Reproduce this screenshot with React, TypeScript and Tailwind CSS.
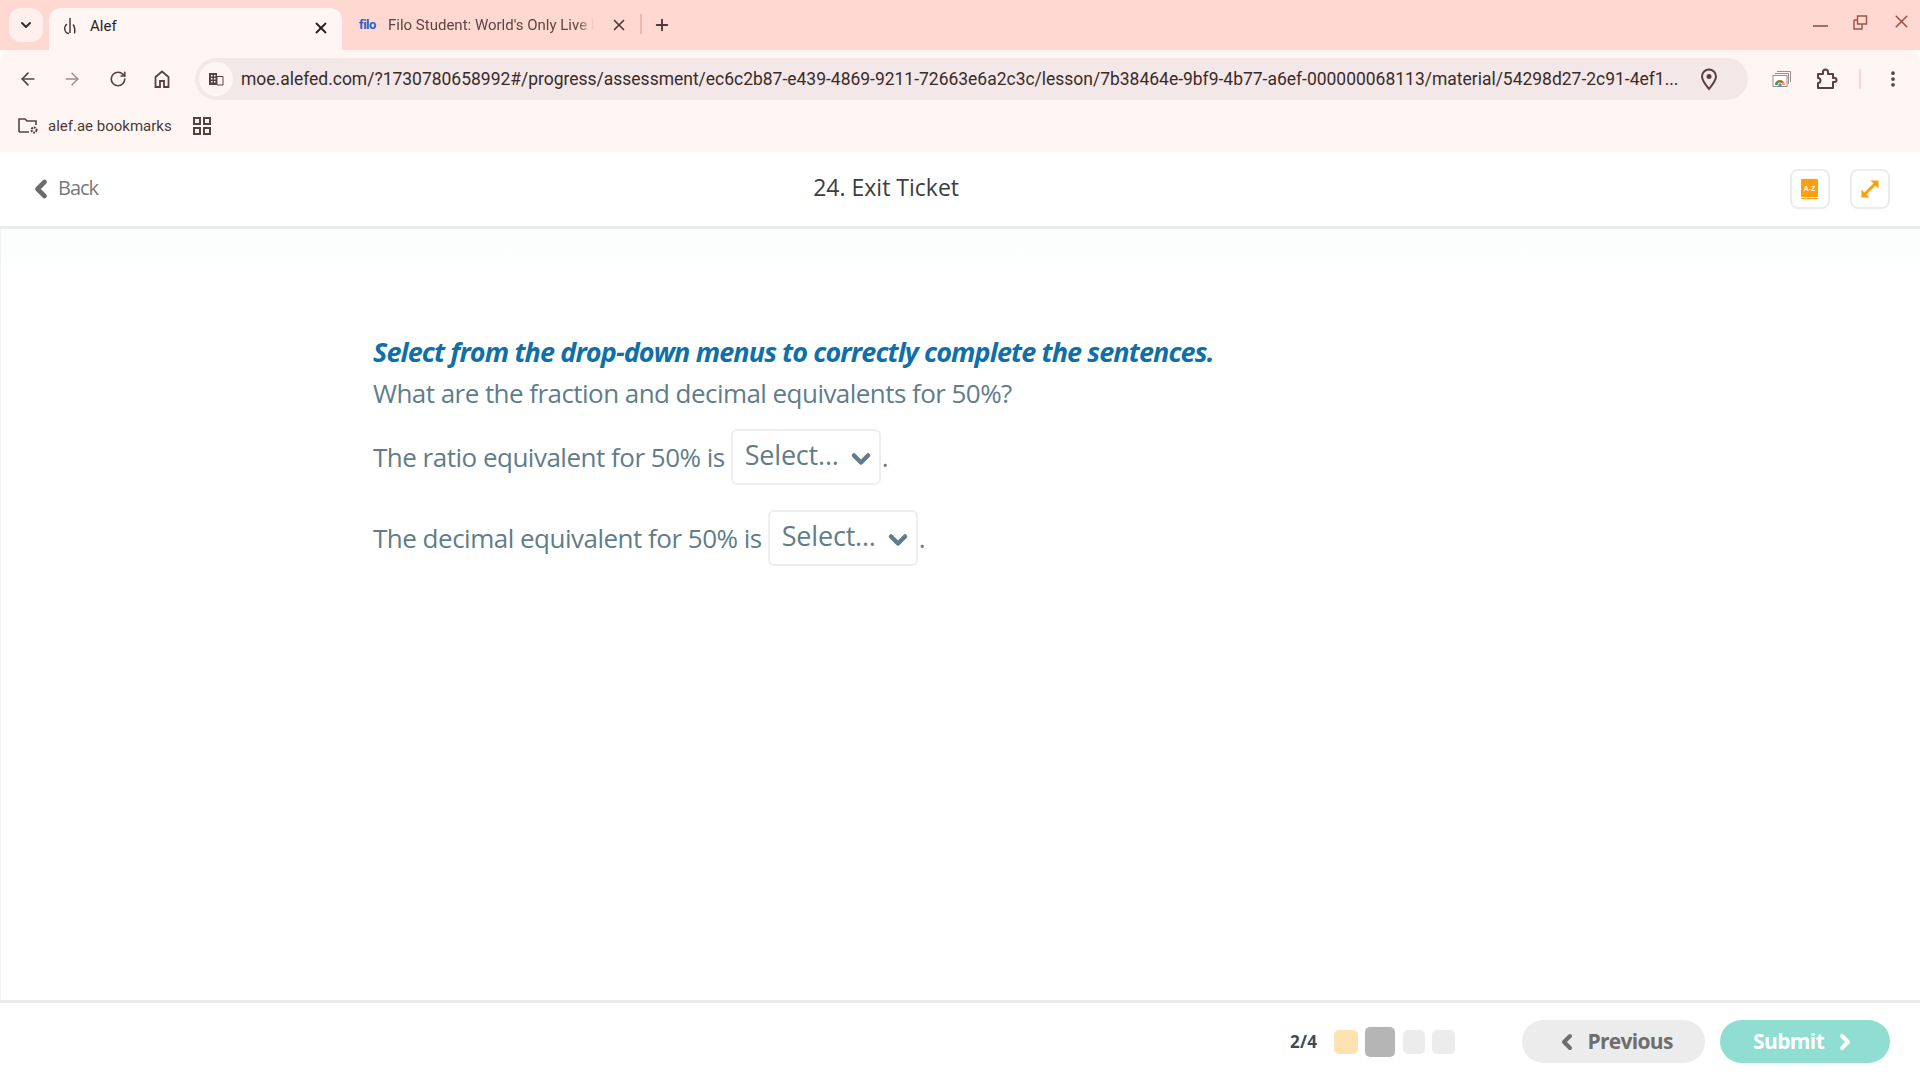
import React from "react";
import { ArrowLeft, ArrowRight, RotateCw, X, Plus, ChevronDown, MoreVertical, ChevronLeft, ChevronRight } from "lucide-react";

const Sel = () => (
  <span className="mx-[6px] mr-0 inline-flex h-[56px] w-[150px] shrink-0 items-center rounded-[6px] border-2 border-[#eceeef] bg-white pl-[12px] align-middle">
    <span className="relative -top-[3px] text-[27px] leading-none tracking-[-0.2px]">Select...</span>
    <svg width="24" height="24" viewBox="0 0 24 24" className="ml-[10px] mt-[4px]" fill="none" stroke="#5f7d8a" strokeWidth="4.500" strokeLinecap="round" strokeLinejoin="round"><path d="M5 8.500l7 7 7-7" /></svg>
  </span>
);

export default function App() {
  return (
    <div className="flex h-[1080px] w-[1920px] flex-col overflow-hidden bg-white font-['Roboto',sans-serif]">
      {/* tabs */}
      <div className="flex h-[50px] items-start bg-[#fed8d1] pl-[9px] pt-[8px] text-[#3f2b28]">
        <div className="flex h-[34px] w-[34px] items-center justify-center rounded-[12px] bg-[#fff0ed]"><ChevronDown size={16} strokeWidth={3} /></div>
        <div className="ml-[6px] flex h-[42px] w-[293px] items-start rounded-t-[12px] bg-[#fff6f4] pl-[12px] pr-[12px] pt-[5px]">
          <svg width="18" height="26" viewBox="0 0 18 26" className="mt-[1px]" fill="none" stroke="#3f2b28" strokeWidth="1.400"><path d="M9 4v15M6 10C2.500 12.500 3 19 8 19.500M12 10.500c2 2.500 2 6 1.500 9" /></svg>
          <span className="ml-[11px] text-[15px] leading-[26px] text-[#2a1f1d]">Alef</span>
          <X size={18} strokeWidth={2.500} className="ml-auto mt-[6px] text-[#2a1f1d]" />
        </div>
        <div className="ml-[17px] flex h-[34px] w-[270px] items-center">
          <span className="w-[22px] text-[13px] font-bold tracking-[-0.5px] text-[#2a62c4]">filo</span>
          <span className="ml-[7px] w-[206px] overflow-hidden whitespace-nowrap text-[15px] text-[#5a4744] [mask-image:linear-gradient(90deg,#000_92%,transparent)]">Filo Student: World's Only Live I</span>
          <X size={18} strokeWidth={2.200} className="ml-[16px] text-[#4a3a37]" />
        </div>
        <div className="ml-[11px] mt-[6px] h-[20px] w-[2px] bg-[#f5b5a9]" />
        <Plus size={18} strokeWidth={2.500} className="ml-[11px] mt-[8px] text-[#4a3a37]" />
        <div className="ml-auto flex items-start pr-[8px] text-[#a14f44]">
          <div className="mt-[17px] h-[2px] w-[15px] bg-[#a96a60]" />
          <svg width="15" height="15" viewBox="0 0 15 15" className="ml-[25px] mt-[7px]" fill="none" stroke="#a14f44" strokeWidth="1.400"><path d="M4.500 1h9v8h-9zM1 5h3.500M1 5v9h8v-4.500" /></svg>
          <X size={21} strokeWidth={1.800} className="ml-[23px] mt-[3px]" />
        </div>
      </div>
      {/* toolbar */}
      <div className="flex h-[58px] items-center rounded-t-[10px] bg-[#fff6f4] text-[#5a4140]">
        <ArrowLeft size={20} strokeWidth={2} className="ml-[18px]" />
        <ArrowRight size={20} strokeWidth={1.800} className="ml-[24px] text-[#a08f8c]" />
        <RotateCw size={18} strokeWidth={2.200} className="ml-[27px]" />
        <svg width="20" height="20" viewBox="0 0 20 20" className="ml-[25px]" fill="none" stroke="#5a4140" strokeWidth="1.800"><path d="M3.500 18V8L10 2.500 16.500 8v10h-4.500v-6H8v6z" /></svg>
        <div className="ml-[23px] flex h-[42px] w-[1553px] items-center rounded-full bg-[#f3e7e7] pl-[4px]">
          <div className="flex h-[34px] w-[34px] items-center justify-center rounded-full bg-[#fff6f4]">
            <svg width="16" height="14" viewBox="0 0 16 14"><path d="M1 1h8v12H1z" fill="#5a4140" /><path d="M9 4.500h6V13H9z" fill="none" stroke="#5a4140" /><path d="M3 3h1.500v1.500H3zM6 3h1.500v1.500H6zM3 6h1.500v1.500H3zM6 6h1.500v1.500H6zM3 9h1.500v1.500H3zM6 9h1.500v1.500H6z" fill="#fff" /></svg>
          </div>
          <span className="ml-[8px] w-[1441px] shrink-0 overflow-hidden whitespace-nowrap text-[17.480px] text-[#3a2b2a]">moe.alefed.com/?1730780658992#/progress/assessment/ec6c2b87-e439-4869-9211-72663e6a2c3c/lesson/7b38464e-9bf9-4b77-a6ef-000000068113/material/54298d27-2c91-4ef1...</span>
          <svg width="20" height="24" viewBox="0 0 20 24" className="ml-[17px]" fill="none" stroke="#5a4140" strokeWidth="2"><path d="M10 22C6 17 3 13.500 3 9.500a7 7 0 0 1 14 0C17 13.500 14 17 10 22z" /><circle cx="10" cy="9.500" r="2.500" fill="#5a4140" stroke="none" /></svg>
        </div>
        <svg width="20" height="18" viewBox="0 0 20 18" className="ml-[24px]"><path d="M5 1.500h13.500V12" fill="none" stroke="#9a8d8c" /><path d="M3 3.500h13.500V14" fill="none" stroke="#9a8d8c" /><rect x="1" y="5.500" width="14" height="11" fill="#fff" stroke="#9a8d8c" /><path d="M3 15a5 5 0 0 1 10 0h-2.500a2.500 2.500 0 0 0-5 0z" fill="#e4a93a" /><path d="M3 15a5 5 0 0 1 3.500-4.700l1 2A2.500 2.500 0 0 0 5.500 15z" fill="#3f9a52" /><path d="M6.500 10.500a5 5 0 0 1 5 1.500L9.500 13a2.500 2.500 0 0 0-2-.7z" fill="#d6473a" /><circle cx="8" cy="15" r="1.700" fill="#4a86e8" /></svg>
        <svg width="22" height="22" viewBox="0 0 22 22" className="ml-[24px]" fill="none" stroke="#5a4140" strokeWidth="2" strokeLinejoin="round"><path d="M2 6h5V4a2.500 2.500 0 0 1 5 0v2h5v4h1.500a2 2 0 0 1 0 4H17v6H2v-5a2.500 2.500 0 0 0 0-5z" /></svg>
        <div className="ml-[21px] h-[20px] w-[2px] bg-[#fbd6cf]" />
        <MoreVertical size={20} strokeWidth={2.500} className="ml-[22px]" />
      </div>
      {/* bookmarks */}
      <div className="flex h-[44px] items-center bg-[#fff6f4] pb-[8px] text-[#4a3a37]">
        <svg width="22" height="20" viewBox="0 0 22 20" className="ml-[18px]" fill="none" stroke="#5a4140" strokeWidth="1.600"><path d="M1 16V3h6l2 2h9v4M1 16h10" /><circle cx="16" cy="14" r="2.500" strokeWidth="2" strokeDasharray="2 .8" /></svg>
        <span className="ml-[8px] text-[15px]">alef.ae bookmarks</span>
        <svg width="18" height="18" viewBox="0 0 18 18" className="ml-[21px]" fill="none" stroke="#5a4140" strokeWidth="2"><rect x="1" y="1" width="6" height="6" /><rect x="11" y="1" width="6" height="6" /><rect x="1" y="11" width="6" height="6" /><rect x="11" y="11" width="6" height="6" /></svg>
      </div>
      {/* header */}
      <div className="flex h-[74px] items-center bg-white font-['Open_Sans',sans-serif]">
        <ChevronLeft size={28} strokeWidth={4} className="ml-[27px] text-[#6b6b6b]" />
        <span className="ml-[3px] pb-[2px] text-[20px] tracking-[-1px] text-[#7a7a7a]">Back</span>
        <div className="ml-[713px] w-[150px] pb-[3px] text-center text-[23px] whitespace-nowrap text-[#3d3d3d]">24. Exit Ticket</div>
        <div className="ml-auto mr-[30px] flex gap-[20px]">
          <div className="flex h-[40px] w-[40px] items-center justify-center rounded-[8px] border-2 border-[#ececec]">
            <svg width="18" height="20" viewBox="0 0 18 20"><rect width="17" height="18" rx="1" fill="#ff9e0d" /><path d="M0 19h17v1H0z" fill="#ff9e0d" /><text x="8.500" y="11.500" textAnchor="middle" fontSize="7" fontWeight="700" fill="#fff" fontFamily="Liberation Sans">A-Z</text></svg>
          </div>
          <div className="flex h-[40px] w-[40px] items-center justify-center rounded-[8px] border-2 border-[#ececec]">
            <svg width="20" height="20" viewBox="0 0 20 20" fill="#ff9e0d" stroke="#ff9e0d" strokeWidth="3"><path d="M4 16L16 4" /><path d="M10.500 1.500h8v8z" strokeWidth="0" /><path d="M1.500 10.500v8h8z" strokeWidth="0" /></svg>
          </div>
        </div>
      </div>
      <div className="h-[3px] bg-[#ebebeb]" />
      {/* content */}
      <div className="flex-1 border-l border-[#f3f3f3] bg-[linear-gradient(#fbfefd,#ffffff_60px)] pl-[372px] pt-[103px] font-['Open_Sans',sans-serif] text-[#5f7d8a]">
        <div className="text-[27px] font-bold italic leading-[40px] tracking-[-0.9px] text-[#0f6fa8]">Select from the drop-down menus to correctly complete the sentences.</div>
        <div className="mt-[1px] text-[26px] leading-[40px] tracking-[-0.55px]">What are the fraction and decimal equivalents for 50%?</div>
        <div className="mt-[16px] flex h-[56px] items-center text-[26px] tracking-[-0.5px]"><span>The ratio equivalent for 50% is</span><Sel /><span className="ml-[1px]">.</span></div>
        <div className="mt-[25px] flex h-[56px] items-center text-[26px] tracking-[-0.5px]"><span>The decimal equivalent for 50% is</span><Sel /><span className="ml-[1px]">.</span></div>
      </div>
      {/* footer */}
      <div className="h-[3px] bg-[#ebebeb]" />
      <div className="flex h-[77px] items-center bg-white font-['Open_Sans',sans-serif]">
        <span className="ml-[1290px] text-[17px] font-bold tracking-[0.2px] text-[#3d4a5c]">2/4</span>
        <div className="ml-[17px] h-[24px] w-[24px] rounded-[5px] bg-[#ffe2b2]" />
        <div className="ml-[7px] h-[30px] w-[30px] rounded-[5px] bg-[#b5b5b5]" />
        <div className="ml-[8px] h-[24px] w-[22px] rounded-[5px] bg-[#ececec]" />
        <div className="ml-[7px] h-[24px] w-[23px] rounded-[5px] bg-[#ececec]" />
        <div className="ml-[67px] flex h-[43px] w-[183px] items-center justify-center rounded-full bg-[#ececec] text-[21px] font-bold tracking-[-0.7px] text-[#6e6e6e]"><ChevronLeft size={24} strokeWidth={4} className="mr-[9px]" />Previous</div>
        <div className="ml-[15px] flex h-[43px] w-[170px] items-center justify-center rounded-full bg-[#90ddd2] text-[21px] font-bold tracking-[-0.6px] text-white">Submit<ChevronRight size={24} strokeWidth={4} className="ml-[9px]" /></div>
      </div>
    </div>
  );
}
